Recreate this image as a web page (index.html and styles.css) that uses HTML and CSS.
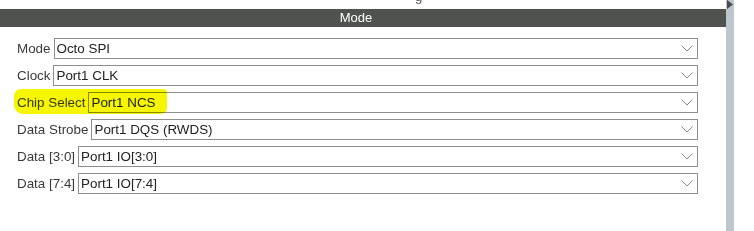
FILE: index.html
```html
<!DOCTYPE html>
<html lang="en">
<head>
    <meta charset="UTF-8">
    <title>Mode</title>
    <link rel="stylesheet" href="styles.css">
</head>
<body>
    <div class="page">
        <div class="main">
            <div class="cut"><span>g</span></div>
            <div class="header">Mode</div>
            <div class="form">
                <div class="row">
                    <span class="label">Mode</span>
                    <div class="select"><span>Octo SPI</span><svg width="12" height="7" viewBox="0 0 12 7"><polyline points="0.5,0.5 6,6 11.5,0.5" /></svg></div>
                </div>
                <div class="row">
                    <span class="label">Clock</span>
                    <div class="select"><span>Port1 CLK</span><svg width="12" height="7" viewBox="0 0 12 7"><polyline points="0.5,0.5 6,6 11.5,0.5" /></svg></div>
                </div>
                <div class="row marked">
                    <div class="marker"></div>
                    <span class="label">Chip Select</span>
                    <div class="select"><span>Port1 NCS</span><svg width="12" height="7" viewBox="0 0 12 7"><polyline points="0.5,0.5 6,6 11.5,0.5" /></svg></div>
                </div>
                <div class="row">
                    <span class="label">Data Strobe</span>
                    <div class="select"><span>Port1 DQS (RWDS)</span><svg width="12" height="7" viewBox="0 0 12 7"><polyline points="0.5,0.5 6,6 11.5,0.5" /></svg></div>
                </div>
                <div class="row">
                    <span class="label">Data [3:0]</span>
                    <div class="select"><span>Port1 IO[3:0]</span><svg width="12" height="7" viewBox="0 0 12 7"><polyline points="0.5,0.5 6,6 11.5,0.5" /></svg></div>
                </div>
                <div class="row">
                    <span class="label">Data [7:4]</span>
                    <div class="select"><span>Port1 IO[7:4]</span><svg width="12" height="7" viewBox="0 0 12 7"><polyline points="0.5,0.5 6,6 11.5,0.5" /></svg></div>
                </div>
            </div>
        </div>
        <div class="scrollbar">
            <svg width="8" height="9" viewBox="0 0 8 9"><polygon points="1,0 7,4.5 1,9" /></svg>
        </div>
    </div>
</body>
</html>
```

FILE: styles.css
```css
body {
    margin: 0;
    font-family: "Liberation Sans", Arial, sans-serif;
    background: #ffffff;
}
.page {
    display: flex;
    width: 754px;
    height: 231px;
    overflow: hidden;
}
.main {
    width: 726px;
}
.cut {
    height: 9px;
    overflow: hidden;
    padding-left: 415px;
    font-size: 13px;
    color: #555;
}
.cut span {
    display: block;
    line-height: 13px;
    margin-top: -10px;
}
.header {
    height: 18px;
    line-height: 18px;
    background: #505250;
    color: #ffffff;
    font-size: 13px;
    text-align: center;
    padding-right: 14px;
}
.form {
    display: flex;
    flex-direction: column;
    gap: 6px;
    padding: 11px 28px 0 17px;
}
.row {
    display: flex;
    align-items: center;
    height: 21px;
    position: relative;
}
.label {
    font-size: 13.4px;
    color: #3a3a3a;
    margin-right: 3px;
    white-space: nowrap;
}
.select {
    flex: 1;
    height: 21px;
    box-sizing: border-box;
    border: 1px solid #8e8e8e;
    background: #ffffff;
    display: flex;
    align-items: center;
    justify-content: space-between;
    padding: 0 4px 0 2px;
    font-size: 13.4px;
    color: #222;
}
.select svg polyline {
    fill: none;
    stroke: #8a8a8a;
    stroke-width: 1;
}
.marker {
    position: absolute;
    left: -3px;
    top: -3px;
    width: 153px;
    height: 25px;
    background: #f6f600;
    border-radius: 7px 4px 6px 9px;
    mix-blend-mode: multiply;
    z-index: 2;
    pointer-events: none;
}
.scrollbar {
    width: 8px;
    background: #bcc6cc;
}
.scrollbar svg {
    display: block;
}
.scrollbar polygon {
    fill: #4a4c4c;
}
```
